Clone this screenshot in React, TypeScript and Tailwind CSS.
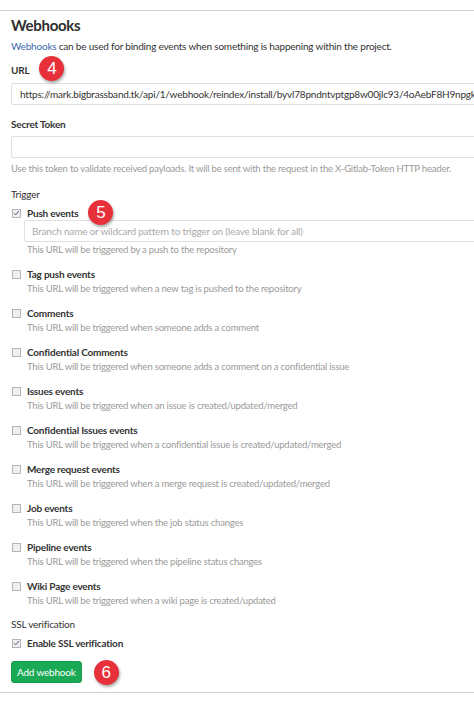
import React from "react"

const triggers = [
  { name: "Tag push events", help: "This URL will be triggered when a new tag is pushed to the repository" },
  { name: "Comments", help: "This URL will be triggered when someone adds a comment" },
  { name: "Confidential Comments", help: "This URL will be triggered when someone adds a comment on a confidential issue" },
  { name: "Issues events", help: "This URL will be triggered when an issue is created/updated/merged" },
  { name: "Confidential Issues events", help: "This URL will be triggered when a confidential issue is created/updated/merged" },
  { name: "Merge request events", help: "This URL will be triggered when a merge request is created/updated/merged" },
  { name: "Job events", help: "This URL will be triggered when the job status changes" },
  { name: "Pipeline events", help: "This URL will be triggered when the pipeline status changes" },
  { name: "Wiki Page events", help: "This URL will be triggered when a wiki page is created/updated" },
]

function Box({ checked }: { checked?: boolean }) {
  return (
    <span className="flex h-[9px] w-[9px] shrink-0 items-center justify-center border border-[#b5b5b5] bg-[#f0f0f0]">
      {checked && (
        <svg viewBox="0 0 10 10" className="h-[8px] w-[8px]">
          <path d="M1.5 5.2 L4 7.6 L8.5 2" fill="none" stroke="#4a5a8a" strokeWidth="1.4" />
        </svg>
      )}
    </span>
  )
}

function Badge({ n }: { n: number }) {
  return (
    <span className="flex h-[25px] w-[25px] shrink-0 items-center justify-center rounded-full bg-[#e8303a] font-['Liberation_Sans',sans-serif] text-[17px] leading-none tracking-normal text-white shadow-[1px_2px_3px_rgba(0,0,0,0.35)]">
      {n}
    </span>
  )
}

export default function App() {
  return (
    <div className="h-[703px] w-[474px] overflow-hidden bg-white font-['Lato',sans-serif] text-[10px] tracking-[-0.2px] text-[#333]">
      <div className="mt-[10px] border-t border-[#cfcfcf] pl-[11px]">
        <h1 className="mt-[4px] text-[15px] font-bold leading-[20px] tracking-[-0.3px] text-[#2e2e2e]">Webhooks</h1>
        <p className="mt-[4px] whitespace-nowrap leading-[14px]">
          <span className="text-[#3a6ab0]">Webhooks</span> can be used for binding events when something is happening within the project.
        </p>

        <div className="mt-[7px] flex h-[20px] items-center gap-[10px]">
          <span className="font-bold">URL</span>
          <span className="-mt-[3px]"><Badge n={4} /></span>
        </div>
        <div className="mt-[3px] flex h-[22px] w-[520px] items-center overflow-hidden whitespace-nowrap rounded-[2px] border border-[#e0e0e0] pl-[8px]">
          https://mark.bigbrassband.tk/api/1/webhook/reindex/install/byvl78pndntvptgp8w00jlc93/4oAebF8H9npgkog7z
        </div>

        <div className="mt-[12px] font-bold leading-[14px]">Secret Token</div>
        <div className="mt-[5px] h-[22px] w-[520px] rounded-[2px] border border-[#e0e0e0]" />
        <p className="mt-[4px] whitespace-nowrap text-[9.5px] leading-[14px] text-[#9a9a9a]">
          Use this token to validate received payloads. It will be sent with the request in the X-Gitlab-Token HTTP header.
        </p>

        <div className="mt-[11px] leading-[14px]">Trigger</div>

        <div className="mt-[5px] flex h-[14px] items-center gap-[6px] pl-[1px]">
          <Box checked />
          <span className="font-bold">Push events</span>
          <span className="ml-[4px] mt-[-2px]"><Badge n={5} /></span>
        </div>
        <div className="ml-[13px] flex h-[22px] w-[520px] items-center whitespace-nowrap rounded-[2px] border border-[#e0e0e0] pl-[7px] text-[#aaa]">
          Branch name or wildcard pattern to trigger on (leave blank for all)
        </div>
        <p className="ml-[16px] mt-[1px] text-[9.5px] leading-[14px] text-[#9a9a9a]">This URL will be triggered by a push to the repository</p>

        <div className="mt-[10px] flex flex-col gap-[10px]">
          {triggers.map((t) => (
            <div key={t.name}>
              <div className="flex h-[14px] items-center gap-[6px] pl-[1px]">
                <Box />
                <span className="font-bold">{t.name}</span>
              </div>
              <p className="ml-[16px] mt-[1px] text-[9.5px] leading-[14px] text-[#9a9a9a]">{t.help}</p>
            </div>
          ))}
        </div>

        <div className="mt-[9px] leading-[14px]">SSL verification</div>
        <div className="mt-[5px] flex h-[14px] items-center gap-[6px] pl-[1px]">
          <Box checked />
          <span className="font-bold">Enable SSL verification</span>
        </div>

        <div className="mt-[11px] flex h-[22px] items-center gap-[12px]">
          <button className="h-[22px] rounded-[3px] border border-[#179a4c] bg-[#1aaa55] px-[5px] text-[10px] tracking-[-0.2px] text-white">
            Add webhook
          </button>
          <Badge n={6} />
        </div>
      </div>
      <div className="mt-[9px] border-t border-[#cfcfcf]" />
    </div>
  )
}
